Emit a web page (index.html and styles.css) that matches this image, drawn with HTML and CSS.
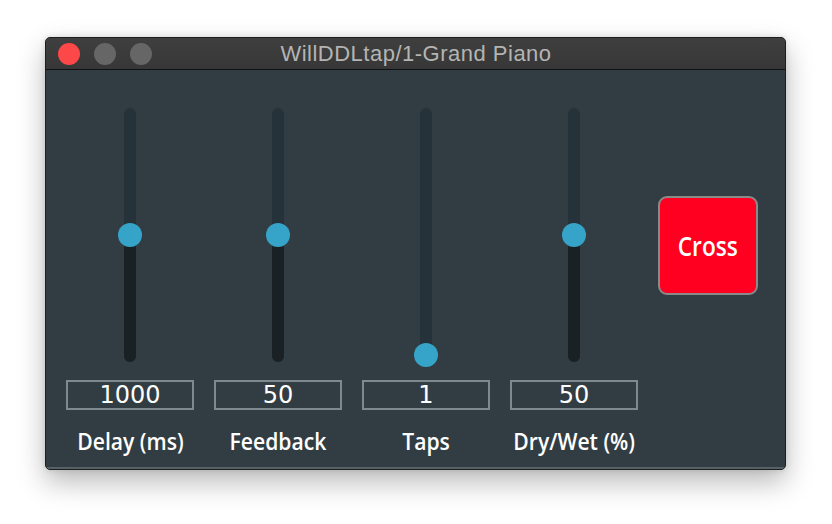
FILE: index.html
```html
<!DOCTYPE html>
<html>
<head>
<meta charset="utf-8">
<link rel="stylesheet" href="styles.css">
</head>
<body>
<div class="window">
  <div class="titlebar">
    <div class="lights">
      <span class="light close"></span>
      <span class="light"></span>
      <span class="light"></span>
    </div>
    <div class="title">WillDDLtap/1-Grand Piano</div>
  </div>
  <div class="content">
    <div class="column">
      <div class="slider">
        <div class="fill" style="height:127px"></div>
        <div class="thumb" style="top:115px"></div>
      </div>
      <div class="value">1000</div>
      <div class="label"><span class="narrow">Delay (ms)</span></div>
    </div>
    <div class="column">
      <div class="slider">
        <div class="fill" style="height:127px"></div>
        <div class="thumb" style="top:115px"></div>
      </div>
      <div class="value">50</div>
      <div class="label"><span class="narrow">Feedback</span></div>
    </div>
    <div class="column">
      <div class="slider">
        <div class="fill" style="height:7px"></div>
        <div class="thumb" style="top:235px"></div>
      </div>
      <div class="value">1</div>
      <div class="label"><span class="narrow">Taps</span></div>
    </div>
    <div class="column">
      <div class="slider">
        <div class="fill" style="height:127px"></div>
        <div class="thumb" style="top:115px"></div>
      </div>
      <div class="value">50</div>
      <div class="label"><span class="narrow">Dry/Wet (%)</span></div>
    </div>
    <div class="cross"><span class="narrow cross-text">Cross</span></div>
  </div>
</div>
</body>
</html>
```

FILE: styles.css
```css
html, body {
  margin: 0;
  padding: 0;
  background: #ffffff;
}
body {
  padding: 37px 0 0 45px;
  width: 832px;
  height: 524px;
  box-sizing: border-box;
  overflow: hidden;
}
.window {
  width: 741px;
  height: 433px;
  box-sizing: border-box;
  border: 1px solid #1e1e1e;
  border-radius: 5px;
  overflow: hidden;
  box-shadow: 0 12px 28px rgba(0,0,0,0.28), 0 0 6px rgba(0,0,0,0.12);
  display: flex;
  flex-direction: column;
  background: #323d43;
}
.titlebar {
  height: 31px;
  flex: none;
  position: relative;
  background: linear-gradient(#3f3f3f, #373737);
  border-bottom: 1px solid #111111;
  display: flex;
  align-items: center;
  justify-content: center;
}
.lights {
  position: absolute;
  left: 12px;
  top: 5px;
  display: flex;
  gap: 14px;
}
.light {
  width: 22px;
  height: 22px;
  border-radius: 50%;
  background: #666666;
}
.light.close {
  background: #fc4848;
}
.title {
  font-family: "Liberation Sans", Arial, sans-serif;
  font-size: 22px;
  letter-spacing: 0.5px;
  color: #b4b4b4;
  margin-left: 1px;
  margin-top: 1px;
}
.content {
  flex: 1;
  display: flex;
  align-items: flex-start;
  padding: 38px 0 0 10px;
  border-bottom: 2px solid #566166;
}
.column {
  width: 148px;
  display: flex;
  flex-direction: column;
  align-items: center;
}
.slider {
  width: 12px;
  height: 254px;
  border-radius: 6px;
  background: #26323a;
  position: relative;
  overflow: visible;
}
.fill {
  position: absolute;
  left: 0;
  right: 0;
  bottom: 0;
  border-radius: 0 0 6px 6px;
  background: #192124;
}
.thumb {
  position: absolute;
  left: -6px;
  width: 24px;
  height: 24px;
  border-radius: 50%;
  background: #36a4c9;
}
.value {
  margin-top: 18px;
  width: 128px;
  height: 30px;
  box-sizing: border-box;
  border: 2px solid #7f8a8e;
  color: #ffffff;
  font-family: "DejaVu Sans", Verdana, sans-serif;
  font-size: 24px;
  line-height: 26px;
  text-align: center;
}
.label {
  margin-top: 15px;
  color: #ffffff;
  font-family: "Open Sans", sans-serif;
  font-weight: 600;
  font-size: 24px;
  line-height: 32px;
  width: 148px;
  display: flex;
  justify-content: center;
}
.narrow {
  display: inline-block;
  white-space: nowrap;
  transform: scaleX(0.88);
}
.cross {
  margin: 88px 0 0 10px;
  width: 100px;
  height: 99px;
  box-sizing: border-box;
  border: 2px solid #8a8a8a;
  border-radius: 9px;
  background: #ff0020;
  color: #ffffff;
  font-family: "Open Sans", sans-serif;
  font-weight: 600;
  font-size: 27px;
  display: flex;
  align-items: center;
  justify-content: center;
}
.cross-text {
  transform: scaleX(0.84);
}
```
